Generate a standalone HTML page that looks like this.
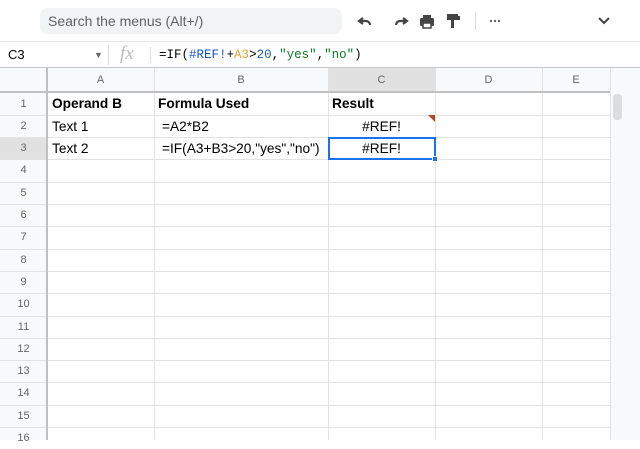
<!DOCTYPE html>
<html><head><style>
*{margin:0;padding:0;box-sizing:border-box}
body{width:640px;height:440px;overflow:hidden;background:#fff;font-family:"Liberation Sans",Arial,sans-serif;position:relative}
.abs{position:absolute}
.search{left:40px;top:8px;width:302px;height:26px;background:#f1f3f4;border-radius:8px;color:#5f6368;font-size:14px;line-height:26px;padding-left:8px}
.vl{background:#c7c7c7;width:1px}
.hl{background:#e2e2e2;height:1px}
.cell{position:absolute;font-size:13.7px;color:#000;line-height:23px;white-space:nowrap}
.hdr{position:absolute;font-size:11px;color:#666;text-align:center;line-height:24px}
.rh{position:absolute;left:0;width:47px;font-size:11px;color:#666;text-align:center}
</style></head><body>
<div class="abs search">Search the menus (Alt+/)</div>
<svg class="abs" style="left:350px;top:10px" width="270" height="22" viewBox="0 0 270 22">
<path d="M13 8 L9 11 L13 14 M9.5 11 H16 a4 4 0 0 1 4 4" fill="none" stroke="#444" stroke-width="2.2"/>
<path d="M53 8 L57 11 L53 14 M56.5 11 H50 a4 4 0 0 0 -4 4" fill="none" stroke="#444" stroke-width="2.2"/>
<rect x="70" y="8" width="14" height="8" rx="1.5" fill="#444"/><rect x="73" y="5" width="8" height="3" fill="#444"/><rect x="73" y="13" width="8" height="5" fill="#fff" stroke="#444" stroke-width="1.5"/>
<rect x="97" y="4" width="11" height="6" fill="#444"/><rect x="108" y="6" width="2" height="4" fill="#444"/><rect x="101" y="10" width="3" height="8" fill="#444"/>
<rect x="125" y="2" width="1" height="18" fill="#ddd"/>
<circle cx="141" cy="11" r="1.2" fill="#666"/><circle cx="145" cy="11" r="1.2" fill="#666"/><circle cx="149" cy="11" r="1.2" fill="#666"/>
<path d="M249 8 L254 13 L259 8" fill="none" stroke="#444" stroke-width="2"/>
</svg>
<div class="abs hl" style="left:0;top:41px;width:640px;background:#e8e8e8"></div>
<div class="abs" style="left:8px;top:46px;font-size:13px;line-height:18px">C3</div>
<div class="abs" style="left:94px;top:46px;font-size:9px;color:#666;line-height:18px">▼</div>
<div class="abs vl" style="left:108px;top:45px;height:20px;background:#ddd"></div>
<div class="abs" style="left:120px;top:42px;font-family:'Liberation Serif',serif;font-style:italic;font-size:19px;color:#bbb;line-height:24px">fx</div>
<div class="abs vl" style="left:150px;top:47px;height:16px;background:#ddd"></div>
<div class="abs" style="left:159px;top:46px;font-family:'Liberation Mono',monospace;font-size:12.5px;line-height:18px;color:#000">=IF(<span style="color:#1155cc">#REF!</span>+<span style="color:#e6a23c">A3</span>&gt;<span style="color:#1f5ea8">20</span>,<span style="color:#0b7a2c">"yes"</span>,<span style="color:#0b7a2c">"no"</span>)</div>
<div class="abs hl" style="left:0;top:67px;width:640px;background:#c7c7c7"></div>
<div class="abs" style="left:0;top:68px;width:610px;height:24px;background:#f8f9fa"></div>
<div class="abs" style="left:0;top:68px;width:47px;height:372px;background:#f8f9fa"></div>
<div class="abs" style="left:328px;top:68px;width:107px;height:24px;background:#e1e1e1"></div>
<div class="abs" style="left:0;top:137px;width:47px;height:22px;background:#e1e1e1"></div>
<div class="abs" style="left:610px;top:68px;width:30px;height:372px;background:#f8f9fa"></div>
<div class="abs" style="left:613px;top:94px;width:9px;height:26px;background:#dadce0;border-radius:4px"></div>
<div class="hdr" style="left:47px;top:68px;width:107px">A</div>
<div class="hdr" style="left:154px;top:68px;width:174px">B</div>
<div class="hdr" style="left:328px;top:68px;width:107px">C</div>
<div class="hdr" style="left:435px;top:68px;width:107px">D</div>
<div class="hdr" style="left:542px;top:68px;width:68px">E</div>
<div id="grid"></div>
<div class="abs" style="left:0;top:91px;width:610px;height:2px;background:#c0c0c0"></div>
<div class="abs" style="left:46px;top:68px;width:2px;height:372px;background:#c0c0c0"></div>
<script>
var g=document.getElementById('grid'),h='';
var cols=[154,328,435,542,610];
for(var i=0;i<cols.length;i++)h+='<div class="abs vl" style="left:'+cols[i]+'px;top:68px;height:372px;background:#e2e2e2"></div>';
for(var r=1;r<=16;r++){var t=92.5+(r-1)*22.3;
h+='<div class="rh" style="top:'+t+'px;height:22.3px;line-height:22px">'+r+'</div>';
if(t+22.3<440)h+='<div class="abs hl" style="left:0;top:'+(t+22.3)+'px;width:610px"></div>';}
g.innerHTML=h;
</script>
<div class="cell" style="left:52px;top:92px;font-weight:bold">Operand B</div>
<div class="cell" style="left:158px;top:92px;font-weight:bold">Formula Used</div>
<div class="cell" style="left:332px;top:92px;font-weight:bold">Result</div>
<div class="cell" style="left:52px;top:115px">Text 1</div>
<div class="cell" style="left:162px;top:115px">=A2*B2</div>
<div class="cell" style="left:328px;top:115px;width:107px;text-align:center">#REF!</div>
<div class="cell" style="left:52px;top:137px">Text 2</div>
<div class="cell" style="left:162px;top:137px">=IF(A3+B3&gt;20,"yes","no")</div>
<div class="cell" style="left:328px;top:137px;width:107px;text-align:center">#REF!</div>
<svg class="abs" style="left:428px;top:115px" width="8" height="8"><path d="M0 0H7V7Z" fill="#b7472a"/></svg>
<div class="abs" style="left:328px;top:137px;width:108px;height:23px;border:2px solid #1a73e8"></div>
<div class="abs" style="left:432px;top:156px;width:6px;height:6px;background:#1a73e8;border:1px solid #fff"></div>
</body></html>
